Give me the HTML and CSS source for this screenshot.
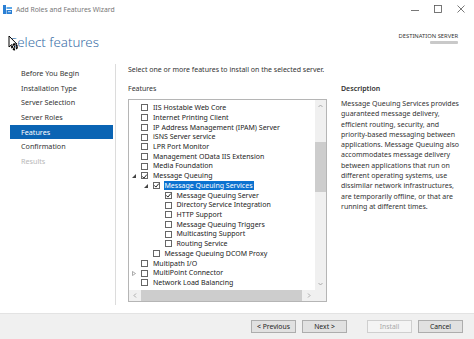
FILE: index.html
```html
<!DOCTYPE html>
<html>
<head>
<meta charset="utf-8">
<link rel="stylesheet" href="styles.css">
</head>
<body>
<div class="window">
  <div class="titlebar">
    <svg class="appicon" width="9" height="9" viewBox="0 0 9 9">
      <rect x="0" y="0" width="3" height="9" fill="#2a7fd4"/>
      <rect x="3.5" y="2" width="5.5" height="2" fill="#5ea8e8"/>
      <rect x="3.5" y="5" width="5.5" height="4" fill="#2a7fd4"/>
      <rect x="5" y="6.2" width="3" height="1" fill="#cfe6fa"/>
    </svg>
    <span class="title">Add Roles and Features Wizard</span>
    <div class="controls">
      <svg class="ctl" width="8" height="8" viewBox="0 0 8 8"><line x1="0" y1="4.5" x2="8" y2="4.5" stroke="#555" stroke-width="0.8"/></svg>
      <svg class="ctl" width="8" height="8" viewBox="0 0 8 8"><rect x="0.5" y="0.5" width="7" height="7" fill="none" stroke="#555" stroke-width="0.8"/></svg>
      <svg class="ctl" width="8" height="8" viewBox="0 0 8 8"><path d="M0.5 0.5 L7.5 7.5 M7.5 0.5 L0.5 7.5" stroke="#555" stroke-width="0.8"/></svg>
    </div>
  </div>

  <div class="header">
    <h1 class="page-title">Select features</h1>
    <div class="dest">
      <div class="dest-label">DESTINATION SERVER</div>
      <div class="dest-name"></div>
    </div>
    <svg class="cursor" width="11" height="16" viewBox="0 0 11 16">
      <path d="M1 1 L1 12 L3.6 9.6 L5.4 13.6 L7 12.9 L5.3 9 L8.8 9 Z" fill="#fff" stroke="#000" stroke-width="1" stroke-linejoin="round"/>
      <circle cx="6.5" cy="12" r="2.6" fill="none" stroke="#000" stroke-width="1.6" stroke-dasharray="2.2 1.2"/>
    </svg>
  </div>

  <div class="body">
    <nav class="nav">
      <div class="nav-item">Before You Begin</div>
      <div class="nav-item">Installation Type</div>
      <div class="nav-item">Server Selection</div>
      <div class="nav-item">Server Roles</div>
      <div class="nav-item active">Features</div>
      <div class="nav-item">Confirmation</div>
      <div class="nav-item disabled">Results</div>
    </nav>

    <main class="main">
      <div class="intro">Select one or more features to install on the selected server.</div>
      <div class="columns">
        <section class="features">
          <div class="label">Features</div>
          <div class="listbox">
            <div class="list-area">
              <div class="tree">
                <div class="row lvl0"><span class="exp"></span><span class="cb"></span><span class="txt">IIS Hostable Web Core</span></div>
                <div class="row lvl0"><span class="exp"></span><span class="cb"></span><span class="txt">Internet Printing Client</span></div>
                <div class="row lvl0"><span class="exp"></span><span class="cb"></span><span class="txt">IP Address Management (IPAM) Server</span></div>
                <div class="row lvl0"><span class="exp"></span><span class="cb"></span><span class="txt">iSNS Server service</span></div>
                <div class="row lvl0"><span class="exp"></span><span class="cb"></span><span class="txt">LPR Port Monitor</span></div>
                <div class="row lvl0"><span class="exp"></span><span class="cb"></span><span class="txt">Management OData IIS Extension</span></div>
                <div class="row lvl0"><span class="exp"></span><span class="cb"></span><span class="txt">Media Foundation</span></div>
                <div class="row lvl0"><span class="exp"><svg width="4" height="4" viewBox="0 0 4 4"><path d="M4 0 L4 4 L0 4 Z" fill="#444"/></svg></span><span class="cb"><svg width="7" height="7" viewBox="0 0 7 7"><path d="M1.3 3.4 L2.9 5.1 L5.8 1.6" fill="none" stroke="#222" stroke-width="1"/></svg></span><span class="txt">Message Queuing</span></div>
                <div class="row lvl1"><span class="exp"><svg width="4" height="4" viewBox="0 0 4 4"><path d="M4 0 L4 4 L0 4 Z" fill="#444"/></svg></span><span class="cb"><svg width="7" height="7" viewBox="0 0 7 7"><path d="M1.3 3.4 L2.9 5.1 L5.8 1.6" fill="none" stroke="#222" stroke-width="1"/></svg></span><span class="txt selected">Message Queuing Services</span></div>
                <div class="row lvl2"><span class="exp"></span><span class="cb"><svg width="7" height="7" viewBox="0 0 7 7"><path d="M1.3 3.4 L2.9 5.1 L5.8 1.6" fill="none" stroke="#222" stroke-width="1"/></svg></span><span class="txt">Message Queuing Server</span></div>
                <div class="row lvl2"><span class="exp"></span><span class="cb"></span><span class="txt">Directory Service Integration</span></div>
                <div class="row lvl2"><span class="exp"></span><span class="cb"></span><span class="txt">HTTP Support</span></div>
                <div class="row lvl2"><span class="exp"></span><span class="cb"></span><span class="txt">Message Queuing Triggers</span></div>
                <div class="row lvl2"><span class="exp"></span><span class="cb"></span><span class="txt">Multicasting Support</span></div>
                <div class="row lvl2"><span class="exp"></span><span class="cb"></span><span class="txt">Routing Service</span></div>
                <div class="row lvl1"><span class="exp"></span><span class="cb"></span><span class="txt">Message Queuing DCOM Proxy</span></div>
                <div class="row lvl0"><span class="exp"></span><span class="cb"></span><span class="txt">Multipath I/O</span></div>
                <div class="row lvl0"><span class="exp"><svg width="4" height="5" viewBox="0 0 4 5"><path d="M0.5 0.5 L3.5 2.5 L0.5 4.5 Z" fill="none" stroke="#888" stroke-width="0.7"/></svg></span><span class="cb"></span><span class="txt">MultiPoint Connector</span></div>
                <div class="row lvl0"><span class="exp"></span><span class="cb"></span><span class="txt">Network Load Balancing</span></div>
              </div>
              <div class="vscroll">
                <svg class="arrow" width="5" height="4" viewBox="0 0 5 4"><path d="M0.5 3 L2.5 1 L4.5 3" fill="none" stroke="#999" stroke-width="0.8"/></svg>
                <div class="vtrack"><div class="vthumb"></div></div>
                <svg class="arrow" width="5" height="4" viewBox="0 0 5 4"><path d="M0.5 1 L2.5 3 L4.5 1" fill="none" stroke="#999" stroke-width="0.8"/></svg>
              </div>
            </div>
            <div class="hscroll-row">
              <div class="hscroll">
                <svg class="arrow" width="4" height="5" viewBox="0 0 4 5"><path d="M3 0.5 L1 2.5 L3 4.5" fill="none" stroke="#999" stroke-width="0.8"/></svg>
                <div class="htrack"><div class="hthumb"></div></div>
                <svg class="arrow" width="4" height="5" viewBox="0 0 4 5"><path d="M1 0.5 L3 2.5 L1 4.5" fill="none" stroke="#999" stroke-width="0.8"/></svg>
              </div>
              <div class="corner"></div>
            </div>
          </div>
        </section>
        <section class="desc">
          <div class="label">Description</div>
          <p class="desc-text">Message Queuing Services provides guaranteed message delivery, efficient routing, security, and priority-based messaging between applications. Message Queuing also accommodates message delivery between applications that run on different operating systems, use dissimilar network infrastructures, are temporarily offline, or that are running at different times.</p>
        </section>
      </div>
    </main>
  </div>

  <div class="footer">
    <button class="btn">&lt; Previous</button>
    <button class="btn">Next &gt;</button>
    <button class="btn disabled">Install</button>
    <button class="btn">Cancel</button>
  </div>
</div>
</body>
</html>
```

FILE: styles.css
```css
* { box-sizing: border-box; }
html, body { margin: 0; padding: 0; }
body {
  width: 474px;
  height: 339px;
  overflow: hidden;
  background: #fff;
  font-family: "Noto Sans", "Open Sans", sans-serif;
  font-size: 7px;
  color: #1e1e1e;
}
.window {
  width: 474px;
  height: 339px;
  display: flex;
  flex-direction: column;
}

/* title bar */
.titlebar {
  height: 18px;
  display: flex;
  align-items: center;
  padding-left: 3px;
}
.appicon { flex: none; }
.title {
  margin-left: 4px;
  font-size: 6.8px;
  color: #777;
}
.controls {
  margin-left: auto;
  display: flex;
  align-items: center;
  gap: 15px;
  padding-right: 9px;
}
.ctl { display: block; }
.ctl:first-child { margin-top: 1px; }

/* header */
.header {
  height: 46px;
  position: relative;
  display: flex;
  align-items: flex-start;
  justify-content: space-between;
  padding: 0 16px 0 10px;
}
.page-title {
  margin: 16px 0 0 0;
  font-weight: 300;
  font-size: 13.3px;
  line-height: 17px;
  color: #3a70a8;
}
.dest {
  margin-top: 15px;
  display: flex;
  flex-direction: column;
  align-items: flex-end;
}
.dest-label {
  font-size: 5.8px;
  line-height: 7px;
  color: #333;
}
.dest-name {
  margin-top: 1px;
  width: 28px;
  height: 3px;
  background: #c9c9c9;
  border-radius: 1px;
}
.cursor {
  position: absolute;
  left: 8px;
  top: 17px;
}

/* body */
.body {
  flex: 1;
  display: flex;
  min-height: 0;
}
.nav {
  width: 116px;
  flex: none;
  padding: 2px 2px 0 10px;
  border-right: 1px solid #dcdcdc;
  margin-bottom: 8px;
}
.nav-item {
  height: 14.7px;
  line-height: 14.7px;
  padding-left: 11px;
  font-size: 7.2px;
  color: #333;
}
.nav-item.active {
  background: #0a64b4;
  color: #fff;
}
.nav-item.disabled { color: #b8b8b8; }

.main {
  flex: 1;
  padding: 1px 0 0 12px;
  display: flex;
  flex-direction: column;
}
.intro {
  line-height: 10px;
  font-size: 7px;
  color: #333;
}
.columns {
  display: flex;
  gap: 14px;
  margin-top: 9px;
}
.features {
  width: 199px;
  flex: none;
}
.label {
  line-height: 10px;
  font-size: 7px;
  color: #333;
}
.desc .label { font-weight: 600; }

.listbox {
  margin-top: 5px;
  height: 203px;
  border: 1px solid #b5b5b5;
  display: flex;
  flex-direction: column;
}
.list-area {
  flex: 1;
  display: flex;
  min-height: 0;
}
.tree {
  flex: 1;
  padding-top: 3px;
  overflow: hidden;
}
.row {
  height: 9.72px;
  display: flex;
  align-items: center;
  white-space: nowrap;
}
.lvl1 { padding-left: 11.5px; }
.lvl2 { padding-left: 23.5px; }
.exp {
  width: 12px;
  height: 7px;
  flex: none;
  display: flex;
  align-items: center;
  padding-left: 3px;
}
.exp svg { display: block; }
.cb {
  width: 7px;
  height: 7px;
  flex: none;
  border: 0.8px solid #666;
  background: #fff;
  position: relative;
}
.cb svg {
  position: absolute;
  left: -0.8px;
  top: -0.8px;
}
.txt {
  margin-left: 4px;
  padding: 0 1px;
  line-height: 9.5px;
  font-size: 7px;
  color: #222;
}
.txt.selected {
  background: #0a72d0;
  color: #fff;
}

.vscroll {
  width: 11px;
  flex: none;
  background: #f0f0f0;
  display: flex;
  flex-direction: column;
  align-items: center;
}
.arrow { display: block; flex: none; }
.vscroll .arrow:first-child { margin-top: 4px; }
.vscroll .arrow:last-child { margin-bottom: 4px; }
.vtrack {
  flex: 1;
  width: 100%;
  padding-top: 34px;
}
.vthumb {
  width: 100%;
  height: 50px;
  background: #cdcdcd;
}
.hscroll-row {
  height: 11px;
  flex: none;
  display: flex;
}
.hscroll {
  flex: 1;
  background: #f0f0f0;
  display: flex;
  align-items: center;
  padding: 0 4px;
}
.htrack {
  flex: 1;
  height: 100%;
  padding: 0 5px 0 4px;
}
.hthumb {
  height: 100%;
  background: #cdcdcd;
}
.corner {
  width: 11px;
  background: #f0f0f0;
}

.desc { flex: 1; padding-right: 8px; }
.desc-text {
  margin: 5px 0 0 0;
  font-size: 7px;
  line-height: 10.3px;
  color: #333;
}

/* footer */
.footer {
  height: 26px;
  flex: none;
  background: #f0f0f0;
  border-top: 1px solid #e3e3e3;
  display: flex;
  align-items: flex-start;
  padding: 6px 11px 0 0;
  justify-content: flex-end;
}
.btn {
  width: 45px;
  height: 13px;
  margin: 0 0 0 6px;
  padding: 0;
  background: #e1e1e1;
  border: 1px solid #adadad;
  font-family: inherit;
  font-size: 6.8px;
  color: #222;
  line-height: 11px;
}
.btn.disabled {
  margin-left: 20px;
  background: #f4f4f4;
  border-color: #cfcfcf;
  color: #a8a8a8;
}
```
